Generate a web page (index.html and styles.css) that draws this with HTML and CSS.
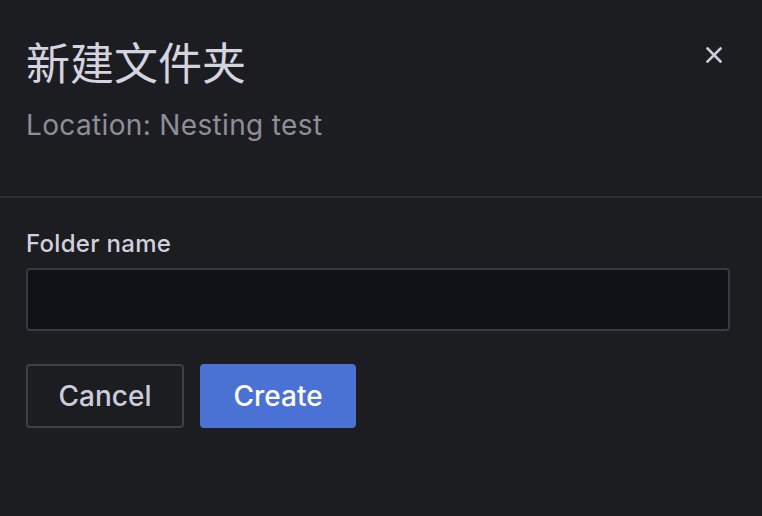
FILE: index.html
```html
<!DOCTYPE html>
<html lang="zh">
<head>
<meta charset="utf-8">
<link rel="stylesheet" href="styles.css">
</head>
<body>
<div class="modal">
  <header class="head">
    <div class="titles">
      <h1 class="title">新建文件夹</h1>
      <div class="subtitle">Location: Nesting test</div>
    </div>
    <button class="close" aria-label="Close">
      <svg width="16" height="16" viewBox="0 0 16 16"><path d="M1.5 1.5 L14.5 14.5 M14.5 1.5 L1.5 14.5" stroke="#ccccdc" stroke-width="2.6" stroke-linecap="square" fill="none"/></svg>
    </button>
  </header>
  <div class="body">
    <label class="label" for="name">Folder name</label>
    <input class="input" id="name" type="text">
    <div class="actions">
      <button class="btn secondary">Cancel</button>
      <button class="btn primary">Create</button>
    </div>
  </div>
</div>
</body>
</html>
```
FILE: styles.css
```css
html, body {
  margin: 0;
  padding: 0;
  background: #1c1d21;
  width: 762px;
  height: 516px;
  overflow: hidden;
}
body {
  font-family: Inter, "Noto Sans CJK SC", sans-serif;
  color: #ccccdc;
}
.modal {
  display: flex;
  flex-direction: column;
}
.head {
  display: flex;
  justify-content: space-between;
  align-items: flex-start;
  box-sizing: border-box;
  height: 198px;
  padding: 35px 26px 0 26px;
  border-bottom: 2px solid #2e2f34;
}
.title {
  margin: 0;
  font-family: "Noto Sans CJK SC", sans-serif;
  font-size: 44px;
  font-weight: 400;
  line-height: 52px;
  color: #d4d4e0;
}
.subtitle {
  margin-top: 20px;
  font-size: 28px;
  line-height: 36px;
  letter-spacing: 0.35px;
  color: #8e8e99;
}
.close {
  background: none;
  border: none;
  padding: 0;
  margin: 12px 14px 0 0;
  width: 16px;
  height: 16px;
  display: flex;
}
.body {
  display: flex;
  flex-direction: column;
  padding: 32px 32px 0 26px;
}
.label {
  font-size: 24px;
  font-weight: 500;
  line-height: 28px;
  letter-spacing: 0.3px;
  color: #d0d0de;
}
.input {
  margin-top: 10px;
  height: 63px;
  box-sizing: border-box;
  background: #111217;
  border: 2px solid #393a40;
  border-radius: 4px;
}
.actions {
  display: flex;
  gap: 16px;
  margin-top: 33px;
}
.btn {
  height: 64px;
  box-sizing: border-box;
  font-family: Inter, sans-serif;
  font-size: 28px;
  font-weight: 500;
  border-radius: 4px;
}
.secondary {
  background: transparent;
  border: 2px solid #3f4046;
  color: #ccccdc;
  padding: 0 30.5px;
}
.primary {
  background: #4a72d4;
  border: none;
  color: #ffffff;
  padding: 0 33.5px;
}
```
